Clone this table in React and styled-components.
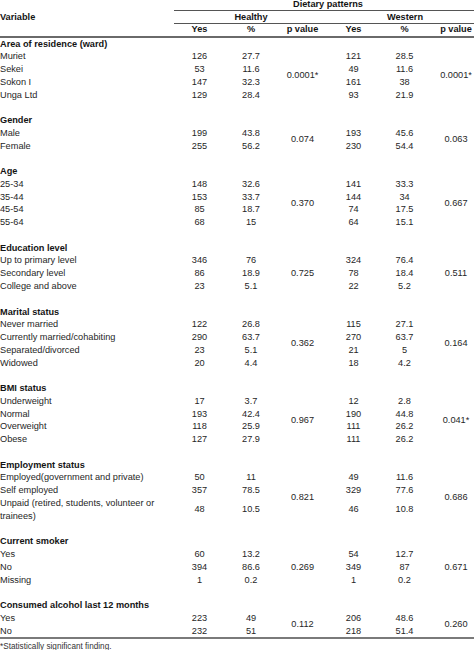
import styled, { createGlobalStyle } from "styled-components";

const GlobalStyle = createGlobalStyle`
    html, body {
        margin: 0;
        padding: 0;
        background: #fff;
        overflow: hidden;
    }
    body {
        font-family: "Liberation Sans", Arial, sans-serif;
        color: #1c1c1c;
    }
`

const groups = [
    {
        title: "Area of residence (ward)",
        pHealthy: "0.0001*",
        pWestern: "0.0001*",
        rows: [
            ["Muriet", "126", "27.7", "121", "28.5"],
            ["Sekei", "53", "11.6", "49", "11.6"],
            ["Sokon I", "147", "32.3", "161", "38"],
            ["Unga Ltd", "129", "28.4", "93", "21.9"],
        ],
    },
    {
        title: "Gender",
        pHealthy: "0.074",
        pWestern: "0.063",
        rows: [
            ["Male", "199", "43.8", "193", "45.6"],
            ["Female", "255", "56.2", "230", "54.4"],
        ],
    },
    {
        title: "Age",
        pHealthy: "0.370",
        pWestern: "0.667",
        rows: [
            ["25-34", "148", "32.6", "141", "33.3"],
            ["35-44", "153", "33.7", "144", "34"],
            ["45-54", "85", "18.7", "74", "17.5"],
            ["55-64", "68", "15", "64", "15.1"],
        ],
    },
    {
        title: "Education level",
        pHealthy: "0.725",
        pWestern: "0.511",
        rows: [
            ["Up to primary level", "346", "76", "324", "76.4"],
            ["Secondary level", "86", "18.9", "78", "18.4"],
            ["College and above", "23", "5.1", "22", "5.2"],
        ],
    },
    {
        title: "Marital status",
        pHealthy: "0.362",
        pWestern: "0.164",
        rows: [
            ["Never married", "122", "26.8", "115", "27.1"],
            ["Currently married/cohabiting", "290", "63.7", "270", "63.7"],
            ["Separated/divorced", "23", "5.1", "21", "5"],
            ["Widowed", "20", "4.4", "18", "4.2"],
        ],
    },
    {
        title: "BMI status",
        pHealthy: "0.967",
        pWestern: "0.041*",
        rows: [
            ["Underweight", "17", "3.7", "12", "2.8"],
            ["Normal", "193", "42.4", "190", "44.8"],
            ["Overweight", "118", "25.9", "111", "26.2"],
            ["Obese", "127", "27.9", "111", "26.2"],
        ],
    },
    {
        title: "Employment status",
        pHealthy: "0.821",
        pWestern: "0.686",
        rows: [
            ["Employed(government and private)", "50", "11", "49", "11.6"],
            ["Self employed", "357", "78.5", "329", "77.6"],
            ["Unpaid (retired, students, volunteer or trainees)", "48", "10.5", "46", "10.8"],
        ],
    },
    {
        title: "Current smoker",
        pHealthy: "0.269",
        pWestern: "0.671",
        rows: [
            ["Yes", "60", "13.2", "54", "12.7"],
            ["No", "394", "86.6", "349", "87"],
            ["Missing", "1", "0.2", "1", "0.2"],
        ],
    },
    {
        title: "Consumed alcohol last 12 months",
        pHealthy: "0.112",
        pWestern: "0.260",
        rows: [
            ["Yes", "223", "49", "206", "48.6"],
            ["No", "232", "51", "218", "51.4"],
        ],
    },
]

export default function App() {
    return (
        <>
            <GlobalStyle />
            <Page>
                <Table>
                    <colgroup>
                        <col style={{ width: 174 }} />
                        <col style={{ width: 51 }} />
                        <col style={{ width: 52 }} />
                        <col style={{ width: 51 }} />
                        <col style={{ width: 51 }} />
                        <col style={{ width: 51 }} />
                        <col style={{ width: 52 }} />
                    </colgroup>
                    <thead>
                        <HeadRow $h={11}>
                            <HeadCell rowSpan={3} $align="left" $last>Variable</HeadCell>
                            <HeadCell colSpan={6} $rule>Dietary patterns</HeadCell>
                        </HeadRow>
                        <HeadRow>
                            <HeadCell colSpan={3} $rule>Healthy</HeadCell>
                            <HeadCell colSpan={3} $rule>Western</HeadCell>
                        </HeadRow>
                        <HeadRow>
                            <HeadCell $last>Yes</HeadCell>
                            <HeadCell $last>%</HeadCell>
                            <HeadCell $last>p value</HeadCell>
                            <HeadCell $last>Yes</HeadCell>
                            <HeadCell $last>%</HeadCell>
                            <HeadCell $last>p value</HeadCell>
                        </HeadRow>
                    </thead>
                    {groups.map((group, gi) => (
                        <tbody key={group.title}>
                            <tr>
                                <GroupTitle colSpan={7}>{group.title}</GroupTitle>
                            </tr>
                            {group.rows.map((row, ri) => {
                                const lastRow = gi === groups.length - 1 && ri === group.rows.length - 1
                                return (
                                    <tr key={ri}>
                                        <LabelCell $bottom={lastRow}>{row[0]}</LabelCell>
                                        <Cell $bottom={lastRow}>{row[1]}</Cell>
                                        <Cell $bottom={lastRow}>{row[2]}</Cell>
                                        {ri === 0 && (
                                            <Cell rowSpan={group.rows.length} $bottom={gi === groups.length - 1}>
                                                {group.pHealthy}
                                            </Cell>
                                        )}
                                        <Cell $bottom={lastRow}>{row[3]}</Cell>
                                        <Cell $bottom={lastRow}>{row[4]}</Cell>
                                        {ri === 0 && (
                                            <Cell rowSpan={group.rows.length} $bottom={gi === groups.length - 1}>
                                                {group.pWestern}
                                            </Cell>
                                        )}
                                    </tr>
                                )
                            })}
                            {gi < groups.length - 1 && (
                                <tr>
                                    <Spacer colSpan={7} />
                                </tr>
                            )}
                        </tbody>
                    ))}
                </Table>
                <Footnote>*Statistically significant finding.</Footnote>
            </Page>
        </>
    )
}

const Page = styled.div`
    width: 482px;
    margin-top: -1px;
`

const Table = styled.table`
    width: 482px;
    table-layout: fixed;
    border-collapse: collapse;
    font-size: 9.2px;
`

const HeadRow = styled.tr`
    height: ${(p) => p.$h || 13}px;
`

const HeadCell = styled.th`
    padding: 0;
    font-weight: 700;
    line-height: 11px;
    color: #141414;
    text-align: ${(p) => p.$align || "center"};
    vertical-align: middle;
    border-bottom: ${(p) => (p.$last ? "2px solid #6a6a6a" : p.$rule ? "1px solid #555" : "none")};
`

const GroupTitle = styled.td`
    padding: 0;
    height: 12.76px;
    line-height: 12.76px;
    font-weight: 700;
    color: #141414;
    white-space: nowrap;
`

const LabelCell = styled.td`
    padding: 0;
    line-height: 12.76px;
    vertical-align: middle;
    color: #262626;
    border-bottom: ${(p) => (p.$bottom ? "2px solid #7a7a7a" : "none")};
`

const Cell = styled.td`
    padding: 0;
    line-height: 12.76px;
    text-align: center;
    vertical-align: middle;
    color: #262626;
    white-space: nowrap;
    border-bottom: ${(p) => (p.$bottom ? "2px solid #7a7a7a" : "none")};
`

const Spacer = styled.td`
    padding: 0;
    height: 12.76px;
`

const Footnote = styled.div`
    font-size: 8.2px;
    line-height: 12px;
    padding-top: 2px;
    color: #333;
`
